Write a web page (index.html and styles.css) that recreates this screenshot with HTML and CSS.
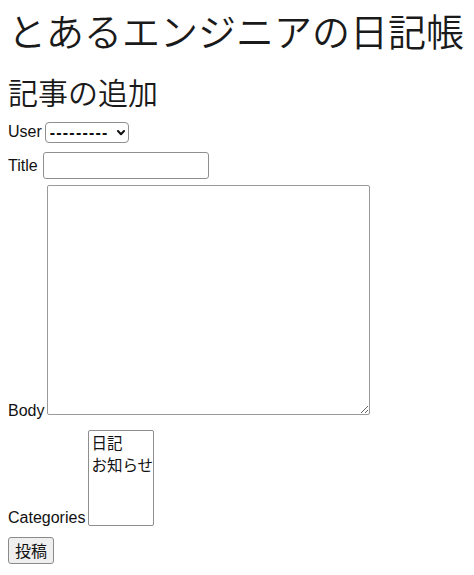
FILE: index.html
```html
<!DOCTYPE html>
<html lang="ja">
<head>
<meta charset="utf-8">
<title>とあるエンジニアの日記帳</title>
<link rel="stylesheet" href="styles.css">
</head>
<body>
<h1 class="site-title">とあるエンジニアの日記帳</h1>
<h2 class="page-title">記事の追加</h2>
<form class="post-form">
  <div class="row row-user">
    <label class="lbl" for="id_user">User</label>
    <span class="select-wrap">
      <select class="select" id="id_user" name="user">
        <option value="" selected>---------</option>
      </select>
      <svg class="chevron" width="8" height="6" viewBox="0 0 8 6" aria-hidden="true"><polyline points="1,1 4,4.2 7,1" fill="none" stroke="#111" stroke-width="2" stroke-linecap="round" stroke-linejoin="round"/></svg>
    </span>
  </div>
  <div class="row row-title">
    <label class="lbl" for="id_title">Title</label>
    <input class="text-input" type="text" id="id_title" name="title">
  </div>
  <div class="row row-body">
    <label class="lbl" for="id_body">Body</label>
    <textarea class="textarea" id="id_body" name="body"></textarea>
  </div>
  <div class="row row-cat">
    <label class="lbl" for="id_categories">Categories</label>
    <select class="listbox" id="id_categories" name="categories" multiple>
      <option value="1">日記</option>
      <option value="2">お知らせ</option>
    </select>
  </div>
  <div class="row row-submit">
    <button class="submit" type="submit">投稿</button>
  </div>
</form>
</body>
</html>
```

FILE: styles.css
```css
html, body {
  background: #fff;
}
body {
  margin: 8px;
  color: #000;
  font-family: "Liberation Sans", "Noto Sans CJK JP", sans-serif;
  font-size: 16px;
}
.site-title {
  margin: 0 0 21px;
  font-family: "Noto Sans CJK JP", sans-serif;
  font-size: 38px;
  line-height: 44px;
  font-weight: 350;
  color: #1a1a1a;
  white-space: nowrap;
}
.page-title {
  margin: 0 0 13px;
  font-family: "Noto Sans CJK JP", sans-serif;
  font-size: 30px;
  line-height: 36px;
  font-weight: 350;
  color: #1a1a1a;
}
.post-form {
  display: flex;
  flex-direction: column;
  align-items: flex-start;
}
.row {
  display: flex;
  gap: 3px;
}
.lbl {
  font-size: 16px;
  line-height: 18px;
  color: #111;
}
.row-user {
  align-items: center;
  height: 21px;
}
.row-user .lbl {
  margin-bottom: 2px;
}
.select-wrap {
  position: relative;
  display: block;
  width: 84px;
  height: 21px;
}
.select {
  -webkit-appearance: none;
  appearance: none;
  box-sizing: border-box;
  width: 84px;
  height: 21px;
  margin: 0;
  padding: 0 0 0 4px;
  border: 1px solid #8e8e8e;
  border-radius: 4px;
  background: #fff;
  color: #111;
  font-family: "Liberation Sans", sans-serif;
  font-size: 16px;
  font-weight: 700;
  letter-spacing: 1.2px;
  line-height: 19px;
}
.chevron {
  position: absolute;
  right: 4px;
  top: 8px;
  pointer-events: none;
}
.row-title {
  margin-top: 9px;
  align-items: center;
  height: 27px;
}
.text-input {
  box-sizing: border-box;
  width: 166px;
  height: 27px;
  margin: 0 0 0 2px;
  padding: 1px 3px;
  border: 1px solid #8f8f8f;
  border-radius: 3px;
  font-size: 16px;
  background: #fff;
}
.row-body {
  margin-top: 6px;
  align-items: flex-end;
}
.textarea {
  box-sizing: border-box;
  width: 323px;
  height: 230px;
  margin: 0 0 5px;
  padding: 2px;
  border: 1px solid #9a9a9a;
  border-radius: 2px;
  background: #fff;
  font-size: 14px;
}
.row-cat {
  margin-top: 10px;
  align-items: flex-end;
}
.listbox {
  box-sizing: border-box;
  width: 66px;
  height: 96px;
  margin: 0 0 1px;
  padding: 0;
  border: 1px solid #8e8e8e;
  border-radius: 2px;
  background: #fff;
  color: #111;
  font-family: "Noto Sans CJK JP", sans-serif;
  font-size: 15.5px;
  overflow: hidden;
}
.listbox option {
  padding: 0 2px;
}
.row-submit {
  margin-top: 10px;
}
.submit {
  box-sizing: border-box;
  width: 46px;
  height: 27px;
  margin: 0;
  padding: 0;
  border: 1px solid #8a8a8a;
  border-radius: 3px;
  background: #efefef;
  color: #111;
  font-family: "Noto Sans CJK JP", sans-serif;
  font-size: 16px;
  line-height: 25px;
}
```
